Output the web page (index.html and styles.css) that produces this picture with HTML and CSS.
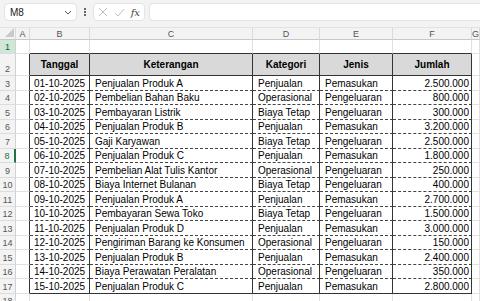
FILE: index.html
```html
<!DOCTYPE html>
<html lang="id">
<head>
  <meta charset="UTF-8">
  <meta name="viewport" content="width=device-width, initial-scale=1.0">
  <title>Kas Oktober 2025</title>
  <link rel="stylesheet" href="styles.css">
</head>
<body>
  <!-- Formula Bar -->
  <div class="toolbar">
    <div class="namebox">
      <span>M8</span>
      <svg width="8" height="5" viewBox="0 0 8 5"><polyline points="1,1 4,4 7,1" fill="none" stroke="#555" stroke-width="1"/></svg>
    </div>
    <div class="dots"><i></i><i></i><i></i></div>
    <div class="fxbox">
      <svg width="10" height="10" viewBox="0 0 10 10"><path d="M1 1 L9 9 M9 1 L1 9" stroke="#bdbdbd" stroke-width="1" fill="none"/></svg>
      <svg width="11" height="9" viewBox="0 0 11 9"><polyline points="1,5 4,8 10,1" stroke="#bdbdbd" stroke-width="1" fill="none"/></svg>
      <span class="fx">fx</span>
    </div>
    <div class="formula"></div>
  </div>

  <!-- Sheet -->
  <div class="sheet" id="sheet">
    <div class="row colhead">
      <div class="cell corner"><svg width="9" height="9" viewBox="0 0 9 9"><polygon points="9,0 9,9 0,9" fill="#c9c9c9"/></svg></div>
      <div class="cell">A</div>
      <div class="cell">B</div>
      <div class="cell">C</div>
      <div class="cell">D</div>
      <div class="cell">E</div>
      <div class="cell">F</div>
      <div class="cell">G</div>
    </div>
    <div class="row first">
      <div class="cell rh sel">1</div>
      <div class="cell"></div>
      <div class="cell top"></div>
      <div class="cell top"></div>
      <div class="cell top"></div>
      <div class="cell top"></div>
      <div class="cell top"></div>
      <div class="cell"></div>
    </div>
    <div class="row head">
      <div class="cell rh">2</div>
      <div class="cell edge"></div>
      <div class="cell th">Tanggal</div>
      <div class="cell th">Keterangan</div>
      <div class="cell th">Kategori</div>
      <div class="cell th">Jenis</div>
      <div class="cell th">Jumlah</div>
      <div class="cell"></div>
    </div>
  </div>

  <script>
    // Data transaksi
    const rows = [
      ["01-10-2025", "Penjualan Produk A", "Penjualan", "Pemasukan", "2.500.000"],
      ["02-10-2025", "Pembelian Bahan Baku", "Operasional", "Pengeluaran", "800.000"],
      ["03-10-2025", "Pembayaran Listrik", "Biaya Tetap", "Pengeluaran", "300.000"],
      ["04-10-2025", "Penjualan Produk B", "Penjualan", "Pemasukan", "3.200.000"],
      ["05-10-2025", "Gaji Karyawan", "Biaya Tetap", "Pengeluaran", "2.500.000"],
      ["06-10-2025", "Penjualan Produk C", "Penjualan", "Pemasukan", "1.800.000"],
      ["07-10-2025", "Pembelian Alat Tulis Kantor", "Operasional", "Pengeluaran", "250.000"],
      ["08-10-2025", "Biaya Internet Bulanan", "Biaya Tetap", "Pengeluaran", "400.000"],
      ["09-10-2025", "Penjualan Produk A", "Penjualan", "Pemasukan", "2.700.000"],
      ["10-10-2025", "Pembayaran Sewa Toko", "Biaya Tetap", "Pengeluaran", "1.500.000"],
      ["11-10-2025", "Penjualan Produk D", "Penjualan", "Pemasukan", "3.000.000"],
      ["12-10-2025", "Pengiriman Barang ke Konsumen", "Operasional", "Pengeluaran", "150.000"],
      ["13-10-2025", "Penjualan Produk B", "Penjualan", "Pemasukan", "2.400.000"],
      ["14-10-2025", "Biaya Perawatan Peralatan", "Operasional", "Pengeluaran", "350.000"],
      ["15-10-2025", "Penjualan Produk C", "Penjualan", "Pemasukan", "2.800.000"]
    ];

    const sheet = document.getElementById("sheet");

    rows.forEach((r, i) => {
      const num = i + 3;
      const last = i === rows.length - 1 ? " last" : "";
      const active = num === 8 ? " active" : "";
      sheet.innerHTML += `
        <div class="row">
          <div class="cell rh${active}">${num}</div>
          <div class="cell edge"></div>
          <div class="cell td date${last}">${r[0]}</div>
          <div class="cell td txt${last}">${r[1]}</div>
          <div class="cell td txt${last}">${r[2]}</div>
          <div class="cell td txt${last}">${r[3]}</div>
          <div class="cell td num${last}">${r[4]}</div>
          <div class="cell"></div>
        </div>
      `;
    });

    // Baris kosong di bawah tabel
    sheet.innerHTML += `
      <div class="row">
        <div class="cell rh">18</div>
        <div class="cell"></div><div class="cell"></div><div class="cell"></div>
        <div class="cell"></div><div class="cell"></div><div class="cell"></div><div class="cell"></div>
      </div>
    `;
  </script>
</body>
</html>
```

FILE: styles.css
```css
* {
  box-sizing: border-box;
}
body {
  margin: 0;
  width: 480px;
  height: 301px;
  overflow: hidden;
  font-family: "Liberation Sans", Arial, sans-serif;
  background: #fff;
  color: #000;
}

/* Formula bar */
.toolbar {
  height: 27px;
  display: flex;
  align-items: flex-start;
  padding: 3px 0 0 4px;
  background: #f3f3f3;
}
.namebox {
  width: 73px;
  height: 18px;
  background: #fff;
  border: 1px solid #e4e4e4;
  border-radius: 4px;
  display: flex;
  align-items: center;
  justify-content: space-between;
  padding: 0 4px 0 5px;
  font-size: 10px;
  color: #222;
}
.dots {
  width: 16px;
  height: 18px;
  display: flex;
  flex-direction: column;
  align-items: center;
  justify-content: center;
  gap: 1.5px;
}
.dots i {
  width: 1.5px;
  height: 1.5px;
  background: #666;
}
.fxbox {
  width: 52px;
  height: 18px;
  background: #fff;
  border: 1px solid #e4e4e4;
  border-radius: 4px;
  display: flex;
  align-items: center;
  justify-content: space-between;
  padding: 0 4px 0 4px;
}
.fx {
  font-family: "DejaVu Serif", "Liberation Serif", serif;
  font-style: italic;
  font-size: 10px;
  color: #444;
}
.formula {
  flex: 1;
  height: 18px;
  margin-left: 4px;
  background: #fff;
  border: 1px solid #e4e4e4;
  border-right: none;
  border-radius: 4px 0 0 4px;
}

/* Sheet grid */
.row {
  display: grid;
  grid-template-columns: 16px 14px 60px 163px 67px 73px 79px 1fr;
  height: 14.5px;
}
.cell {
  border-right: 1px solid #e1e1e1;
  border-bottom: 1px solid #e1e1e1;
  font-size: 10px;
  line-height: 12px;
  display: flex;
  align-items: flex-end;
  padding: 0 2px;
  white-space: nowrap;
  overflow: hidden;
}
.colhead {
  height: 13px;
}
.colhead .cell {
  background: #f3f3f3;
  border-top: 1px solid #e2e2e2;
  border-right-color: #dadada;
  border-bottom-color: #c8c8c8;
  justify-content: center;
  align-items: center;
  color: #555;
  font-size: 9px;
}
.colhead .corner {
  justify-content: flex-end;
  align-items: flex-end;
  padding: 0 1px 2px 0;
}
.rh {
  background: #f3f3f3;
  border-right-color: #d2d2d2;
  border-bottom-color: #dcdcdc;
  justify-content: center;
  color: #555;
  font-size: 9px;
  padding: 0;
}
.rh.sel {
  background: #cfe7d7;
  color: #1d5e3a;
}
.rh.active {
  color: #217346;
  border-right: 2px solid #217346;
}
.first {
  height: 14px;
}
.head {
  height: 22px;
}
.top {
  border-bottom-color: #333;
}
.edge {
  border-right-color: #333;
}
.th {
  background: #d9d9d9;
  border-right-color: #333;
  border-bottom-color: #333;
  font-weight: bold;
  justify-content: center;
  align-items: center;
}
.td {
  border-right-color: #333;
  border-bottom: 1px dashed #444;
}
.td.last {
  border-bottom: 1px solid #333;
}
.date {
  justify-content: center;
}
.txt {
  padding-left: 5px;
}
.num {
  justify-content: flex-end;
  padding-right: 2px;
}
```
